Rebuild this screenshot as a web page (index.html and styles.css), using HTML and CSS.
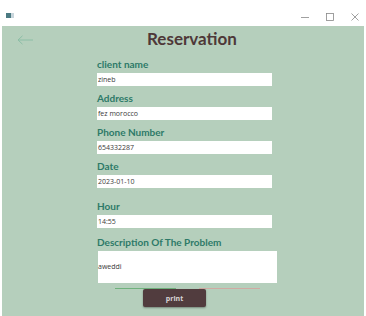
FILE: index.html
```html
<!DOCTYPE html>
<html>
<head>
<meta charset="utf-8">
<link rel="stylesheet" href="styles.css">
</head>
<body>
<div class="titlebar">
  <span class="appicon"><span class="ai-a"></span><span class="ai-b"></span></span>
  <div class="controls">
    <svg width="10" height="10" viewBox="0 0 10 10"><path d="M1 5.5H9" stroke="#888" stroke-width="0.8"/></svg>
    <svg width="10" height="10" viewBox="0 0 10 10"><rect x="1.5" y="1.5" width="7" height="7" fill="none" stroke="#888" stroke-width="0.8"/></svg>
    <svg width="10" height="10" viewBox="0 0 10 10"><path d="M1.5 1.5L8.5 8.5M8.5 1.5L1.5 8.5" stroke="#888" stroke-width="0.8"/></svg>
  </div>
</div>
<div class="app">
  <div class="header">
    <svg class="back" width="17" height="10" viewBox="0 0 17 10"><path d="M1 5H16M5.5 0.8L1 5L5.5 9.2" fill="none" stroke="#8cbea6" stroke-width="1"/></svg>
    <h1 class="title">Reservation</h1>
  </div>
  <div class="form">
    <div class="field">
      <label class="lbl">client name</label>
      <div class="inp">zineb</div>
    </div>
    <div class="field">
      <label class="lbl">Address</label>
      <div class="inp">fez morocco</div>
    </div>
    <div class="field">
      <label class="lbl">Phone Number</label>
      <div class="inp">654332287</div>
    </div>
    <div class="field">
      <label class="lbl">Date</label>
      <div class="inp">2023-01-10</div>
    </div>
    <div class="field field-hour">
      <label class="lbl">Hour</label>
      <div class="inp">14:55</div>
    </div>
    <div class="field field-desc">
      <label class="lbl">Description Of The Problem</label>
      <div class="inp area">aweddi</div>
    </div>
  </div>
  <div class="actions">
    <div class="rule"></div>
    <button class="print">print</button>
  </div>
</div>
</body>
</html>
```
FILE: styles.css
```css
html, body {
  margin: 0;
  padding: 0;
  background: #ffffff;
  width: 366px;
  height: 316px;
  overflow: hidden;
  font-family: "Lato", "Open Sans", sans-serif;
}
.titlebar {
  height: 26px;
  display: flex;
  align-items: center;
  justify-content: space-between;
  background: #ffffff;
}
.appicon {
  display: flex;
  margin-left: 6px;
  margin-top: 4px;
  height: 5px;
}
.ai-a {
  width: 5px;
  height: 5px;
  background: #4b7a82;
}
.ai-b {
  width: 3px;
  height: 5px;
  background: #c9d6dc;
}
.controls {
  display: flex;
  gap: 15px;
  margin-right: 6px;
  margin-top: 7px;
}
.app {
  margin: 0 2px;
  height: 290px;
  background: #b5cfbc;
  display: flex;
  flex-direction: column;
}
.header {
  height: 26px;
  display: flex;
  align-items: center;
}
.back {
  margin-left: 15px;
  margin-top: 2px;
}
.title {
  margin: 0 0 0 113px;
  font-size: 17px;
  font-weight: 700;
  color: #4e3838;
  line-height: 26px;
}
.form {
  padding: 6px 0 0 95px;
  display: flex;
  flex-direction: column;
  gap: 6px;
}
.field {
  display: flex;
  flex-direction: column;
}
.field-hour {
  margin-top: 6px;
}
.field-desc {
  margin-top: 2px;
}
.lbl {
  font-size: 10px;
  font-weight: 700;
  color: #2d7a68;
  line-height: 12px;
  height: 12px;
  margin-bottom: 3px;
}
.inp {
  width: 175px;
  height: 13px;
  box-sizing: border-box;
  background: #ffffff;
  font-family: "Open Sans", sans-serif;
  font-size: 7px;
  line-height: 13px;
  color: #3a3a3a;
  padding-left: 1px;
}
.area {
  width: 179px;
  height: 32px;
  line-height: 32px;
  margin-left: 1px;
  padding-left: 0;
}
.actions {
  margin-top: 5px;
  height: 20px;
}
.rule {
  margin-left: 113px;
  width: 145px;
  height: 1px;
  background: linear-gradient(to right, #6fb27c 0, #6fb27c 61px, transparent 61px, transparent 84px, #d0aaa2 84px, #d0aaa2 145px);
}
.print {
  display: block;
  margin: 0 0 0 141px;
  width: 63px;
  height: 18px;
  border: none;
  border-radius: 2px;
  background: #513c3e;
  color: #d8d4d6;
  font-family: "Open Sans", sans-serif;
  font-size: 7px;
  font-weight: 700;
  box-shadow: 0 1px 2px rgba(0,0,0,0.35);
  padding: 0;
}
```
